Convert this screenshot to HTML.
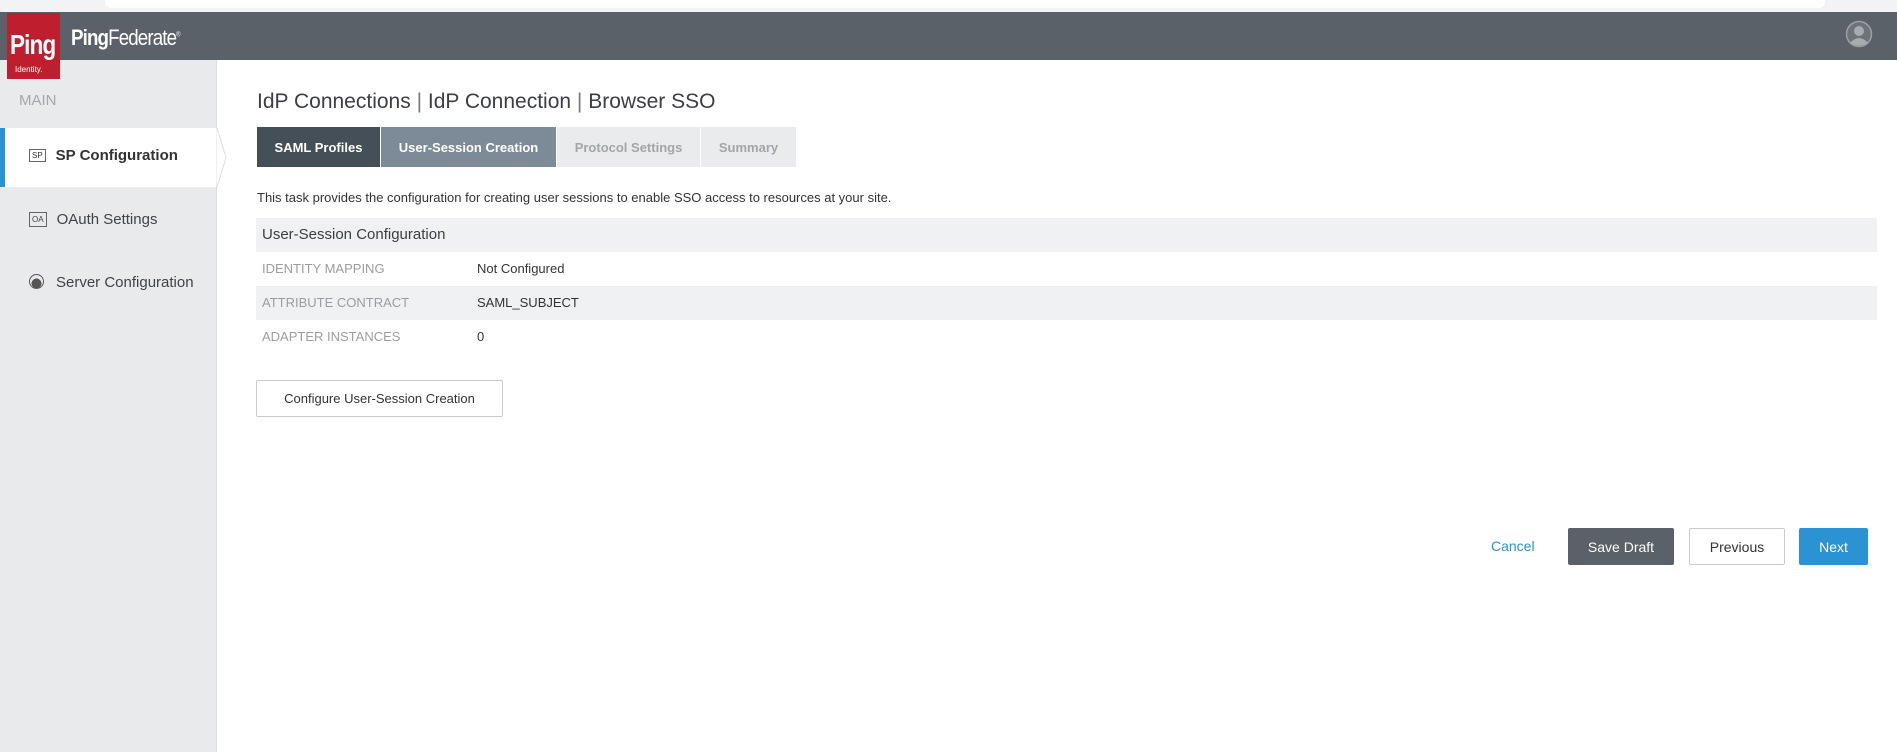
<!DOCTYPE html>
<html><head><meta charset="utf-8"><style>
*{box-sizing:border-box;margin:0;padding:0}
body{width:1897px;height:752px;overflow:hidden;background:#fff;font-family:"Liberation Sans",sans-serif;position:relative;color:#333}
.abs{position:absolute}
#top{left:0;top:0;width:1897px;height:12px;background:#f1f3f4}
#url{left:105px;top:0;width:1720px;height:8px;background:#fff;border-radius:0 0 6px 6px}
#hdr{left:0;top:12px;width:1897px;height:48px;background:#5b6168}
#logo{left:7px;top:13px;width:53px;height:66px;background:#be1e2d;color:#fff;z-index:5}
#sb{left:0;top:60px;width:217px;height:692px;background:#e8eaeb;border-right:1px solid #dcdfe1}
.nav{left:0;width:217px;font-size:15px;color:#3f4448}
.tab{top:127px;height:40px;font-size:13px;font-weight:bold;display:flex;align-items:center;justify-content:center}
.row{left:256px;width:1621px;height:34px;font-size:13px;line-height:34px}
.lab{position:absolute;left:6px;color:#9a9ea2}
.val{position:absolute;left:221px;color:#333}
.btn{height:37px;font-size:14px;display:flex;align-items:center;justify-content:center;border-radius:2px}
</style></head><body>
<div class="abs" id="top"></div><div class="abs" id="url"></div>
<div class="abs" id="hdr"></div>
<div class="abs" id="logo"><div style="position:absolute;left:3px;top:16px;font-size:28px;font-weight:bold;letter-spacing:-1px;transform:scaleX(.8);transform-origin:left">Ping</div><div style="position:absolute;left:8px;top:52px;font-size:8px">Identity.</div></div>
<div class="abs" style="left:71px;top:25px;color:#fff;font-size:22px;letter-spacing:-1px;transform:scaleX(.85);transform-origin:left"><b>Ping</b>Federate<sup style="font-size:7px">®</sup></div>
<svg class="abs" style="left:1845px;top:20px" width="28" height="28" viewBox="0 0 28 28"><circle cx="14" cy="14" r="12.5" fill="#6d7378" stroke="#9aa0a5" stroke-width="1.5"/><circle cx="14" cy="11" r="5" fill="#a7acb0"/><path d="M5 23 Q14 13 23 23 Q14 28 5 23Z" fill="#a7acb0"/></svg>
<div class="abs" id="sb"></div>
<div class="abs" style="left:19px;top:92px;font-size:15px;color:#a4a8ab">MAIN</div>
<div class="abs" style="left:0;top:128px;width:217px;height:59px;background:#fff;border-left:5px solid #2b93d1"></div>
<svg class="abs" style="left:216px;top:128px" width="12" height="59"><path d="M0 0 L1 0 L10 29.5 L1 59 L0 59Z" fill="#fff" stroke="#dcdfe1"/></svg>
<div class="abs nav" style="top:147px;left:29px;font-weight:bold;color:#333"><span style="display:inline-block;border:1px solid #666;font-size:8px;padding:1px 2px;margin-right:10px;vertical-align:2px;font-weight:normal">SP</span>SP Configuration</div>
<div class="abs nav" style="top:211px;left:29px"><span style="display:inline-block;border:1px solid #666;font-size:8px;padding:2px 2px;margin-right:10px;vertical-align:2px">OA</span>OAuth Settings</div>
<div class="abs nav" style="top:274px;left:29px"><span style="display:inline-block;width:15px;height:15px;border:1.5px solid #555;border-radius:50%;margin-right:12px;vertical-align:-2px;background:radial-gradient(circle at 50% 65%,#555 45%,transparent 47%)"></span>Server Configuration</div>
<div class="abs" style="left:257px;top:90px;font-size:21px;color:#3a3f44">IdP Connections <span style="color:#777">|</span> IdP Connection <span style="color:#777">|</span> Browser SSO</div>
<div class="abs tab" style="left:257px;width:123px;background:#444f58;color:#fff">SAML Profiles</div>
<div class="abs tab" style="left:381px;width:175px;background:#7d8b99;color:#fff">User-Session Creation</div>
<div class="abs tab" style="left:557px;width:143px;background:#e9ebed;color:#a2a6aa">Protocol Settings</div>
<div class="abs tab" style="left:701px;width:95px;background:#e9ebed;color:#a2a6aa">Summary</div>
<div class="abs" style="left:257px;top:190px;font-size:13px;color:#333">This task provides the configuration for creating user sessions to enable SSO access to resources at your site.</div>
<div class="abs row" style="top:218px;background:#f0f1f3;font-size:15px"><span style="position:absolute;left:6px;color:#3a3f44">User-Session Configuration</span></div>
<div class="abs row" style="top:252px"><span class="lab">IDENTITY MAPPING</span><span class="val">Not Configured</span></div>
<div class="abs row" style="top:286px;background:#f0f1f3"><span class="lab">ATTRIBUTE CONTRACT</span><span class="val">SAML_SUBJECT</span></div>
<div class="abs row" style="top:320px"><span class="lab">ADAPTER INSTANCES</span><span class="val">0</span></div>
<div class="abs btn" style="left:256px;top:380px;width:247px;height:37px;border:1px solid #c8ccd0;font-size:13px;color:#333">Configure User-Session Creation</div>
<div class="abs" style="left:1491px;top:538px;font-size:14px;color:#2b93d1">Cancel</div>
<div class="abs btn" style="left:1568px;top:528px;width:106px;background:#5b6168;color:#fff">Save Draft</div>
<div class="abs btn" style="left:1689px;top:528px;width:96px;border:1px solid #c8ccd0;color:#333">Previous</div>
<div class="abs btn" style="left:1799px;top:528px;width:69px;background:#2b93d1;color:#fff">Next</div>
</body></html>
